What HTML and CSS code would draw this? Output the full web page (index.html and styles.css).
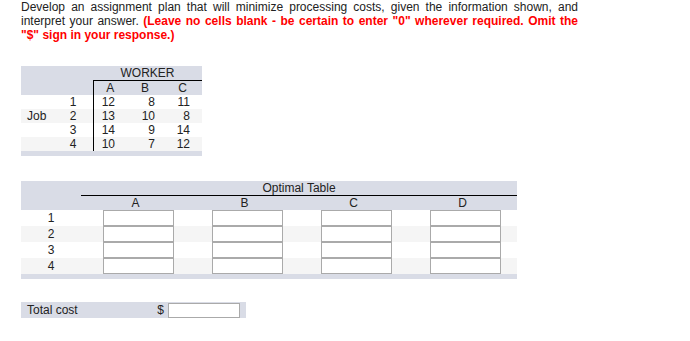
FILE: index.html
```html
<!DOCTYPE html>
<html>
<head>
<meta charset="utf-8">
<title>Assignment plan</title>
<link rel="stylesheet" href="styles.css">
</head>
<body>
<div class="question">
  <p class="prompt">Develop an assignment plan that will minimize processing costs, given the information shown, and interpret your answer. <b class="warn">(Leave no cells blank - be certain to enter "0" wherever required. Omit the "$" sign in your response.)</b></p>

  <!-- cost table -->
  <table class="costs">
    <colgroup>
      <col class="c-label"><col class="c-num"><col class="c-a"><col class="c-b"><col class="c-c">
    </colgroup>
    <tr class="head">
      <td></td><td></td><td colspan="3" class="center">WORKER</td>
    </tr>
    <tr class="head">
      <td></td><td></td>
      <td class="center ruled vline">A</td><td class="center ruled">B</td><td class="center ruled">C</td>
    </tr>
    <tr><td></td><td class="rownum">1</td><td class="vline val pa">12</td><td class="val pb">8</td><td class="val pc">11</td></tr>
    <tr class="alt"><td class="label">Job</td><td class="rownum">2</td><td class="vline val pa">13</td><td class="val pb">10</td><td class="val pc">8</td></tr>
    <tr><td></td><td class="rownum">3</td><td class="vline val pa">14</td><td class="val pb">9</td><td class="val pc">14</td></tr>
    <tr class="alt"><td></td><td class="rownum">4</td><td class="vline val pa">10</td><td class="val pb">7</td><td class="val pc">12</td></tr>
    <tr class="foot"><td colspan="5"></td></tr>
  </table>

  <!-- answer grid -->
  <table class="optimal">
    <colgroup>
      <col class="o-num"><col class="o-col"><col class="o-col"><col class="o-col"><col class="o-col">
    </colgroup>
    <tr class="head">
      <td></td><td colspan="4" class="center underline">Optimal Table</td>
    </tr>
    <tr class="head">
      <td></td><td class="center">A</td><td class="center">B</td><td class="center">C</td><td class="center">D</td>
    </tr>
    <tr><td class="center">1</td><td><input type="text"></td><td><input type="text"></td><td><input type="text"></td><td><input type="text"></td></tr>
    <tr class="alt"><td class="center">2</td><td><input type="text"></td><td><input type="text"></td><td><input type="text"></td><td><input type="text"></td></tr>
    <tr><td class="center">3</td><td><input type="text"></td><td><input type="text"></td><td><input type="text"></td><td><input type="text"></td></tr>
    <tr class="alt"><td class="center">4</td><td><input type="text"></td><td><input type="text"></td><td><input type="text"></td><td><input type="text"></td></tr>
    <tr class="foot"><td colspan="5"></td></tr>
  </table>

  <div class="total">
    <span class="total-label">Total cost</span>
    <span class="dollar">$</span>
    <input type="text" class="total-input">
  </div>
</div>
</body>
</html>
```

FILE: styles.css
```css
body {
  margin: 0;
  font-family: "Liberation Sans", Arial, sans-serif;
  font-size: 12px;
  color: #222;
  background: #fff;
}

.question {
  padding-left: 21px;
}

.prompt {
  margin: 0;
  width: 557px;
  line-height: 14px;
  text-align: justify;
  color: #222;
}

.warn {
  color: #f00;
}

/* shared table look */
table {
  border-collapse: collapse;
  table-layout: fixed;
  font-size: 12px;
}

td {
  padding: 0;
}

.head td {
  background: #d9dce6;
}

.alt td {
  background: #f5f5f5;
}

.foot td {
  background: #d9dce6;
  height: 5px;
  line-height: 0;
  font-size: 0;
}

.center {
  text-align: center;
}

/* cost table */
.costs {
  margin-top: 24px;
  width: 181px;
}

.costs tr:not(.foot) td {
  height: 14px;
  line-height: 14px;
}

.c-label { width: 32px; }
.c-num { width: 40px; }
.c-a { width: 34px; }
.c-b { width: 36px; }
.c-c { width: 39px; }

.costs .ruled {
  border-top: 1px solid #000;
}

.costs .vline {
  border-left: 1px solid #000;
}

.label {
  padding-left: 6px !important;
}

.rownum {
  text-align: right;
  padding-right: 16px !important;
}

.val {
  text-align: right;
}

.pa { padding-right: 12px !important; }
.pb { padding-right: 8px !important; }
.pc { padding-right: 12px !important; }

/* answer grid */
.optimal {
  margin-top: 25px;
  width: 496px;
}

.o-num { width: 60px; }
.o-col { width: 109px; }

.optimal .head td {
  height: 14px;
  line-height: 14px;
}

.optimal .underline {
  border-bottom: 1px solid #000;
}

.optimal tr:not(.head):not(.foot) td {
  height: 16px;
  line-height: 16px;
}

.optimal input {
  display: block;
  box-sizing: border-box;
  width: 71px;
  height: 16px;
  margin: 0 0 0 22px;
  padding: 0 2px;
  border: 1px solid #aaa;
  font: inherit;
  background: #fff;
}

/* total row */
.total {
  margin-top: 23px;
  width: 225px;
  height: 16px;
  box-sizing: border-box;
  padding: 0 6px;
  display: flex;
  align-items: center;
  background: #d9dce6;
  line-height: 16px;
}

.total-label {
  flex: 1;
}

.dollar {
  margin-right: 4px;
}

.total-input {
  box-sizing: border-box;
  width: 72px;
  height: 15px;
  margin: 0;
  padding: 0 2px;
  border: 1px solid #aaa;
  background: #fff;
  font: inherit;
}
```
